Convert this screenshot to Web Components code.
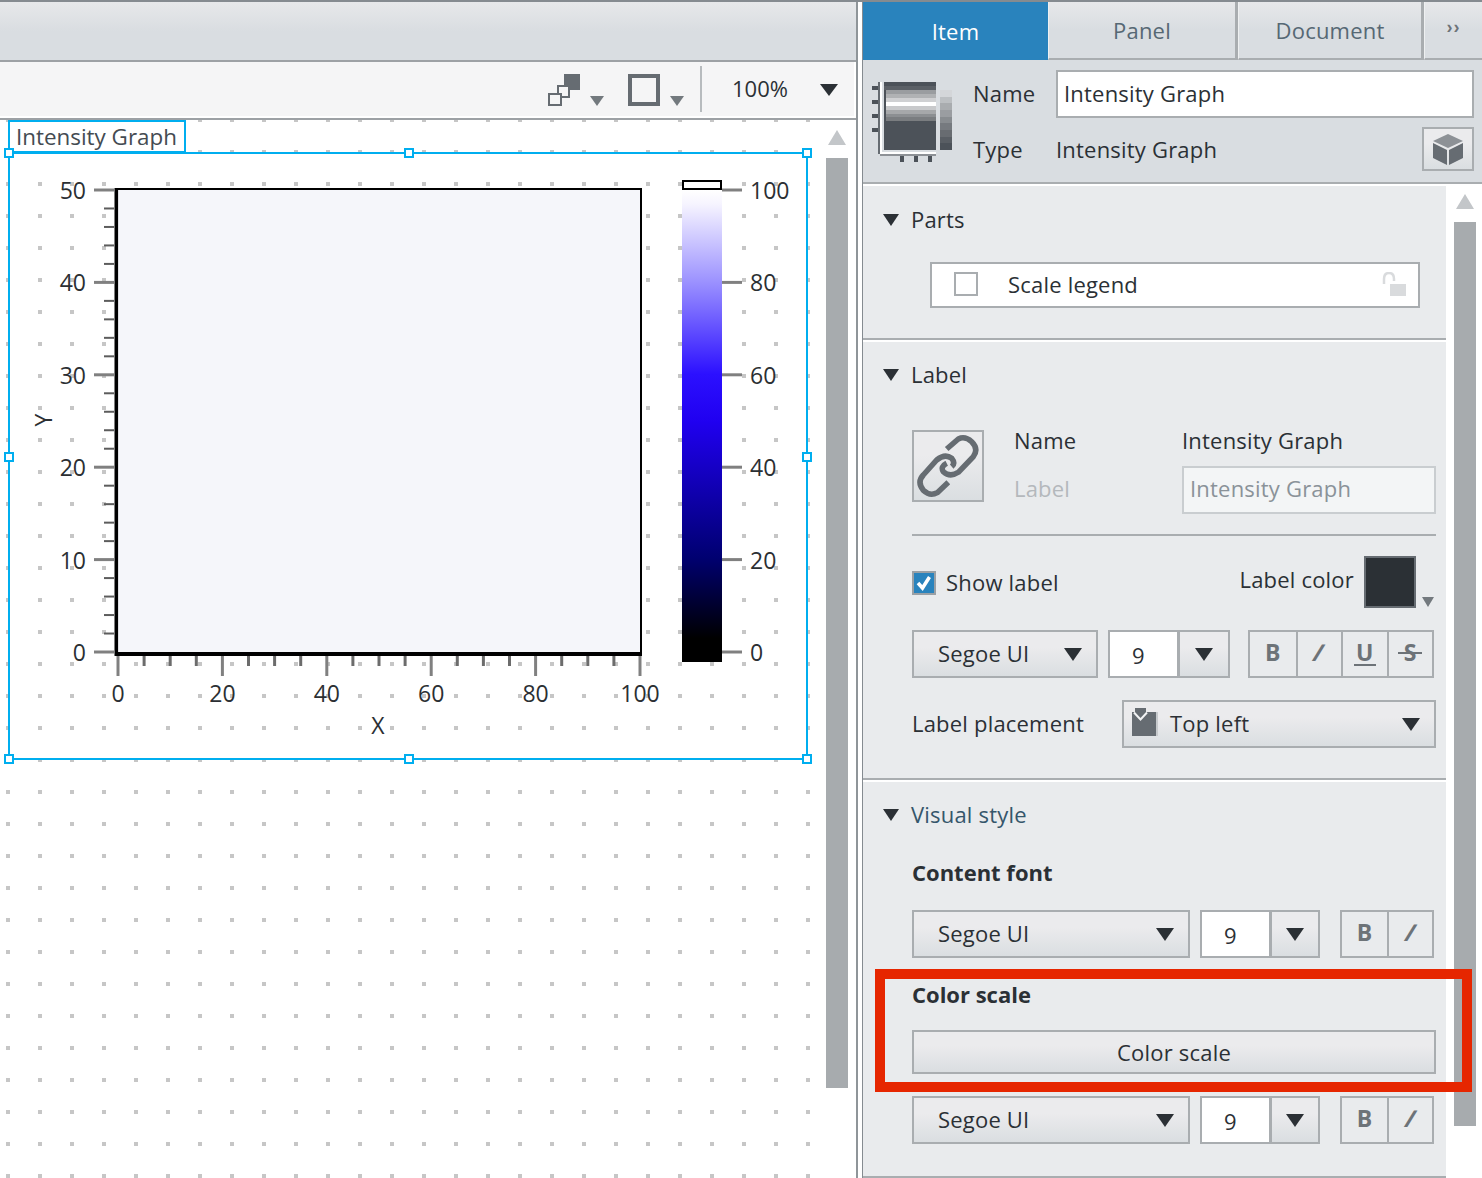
<!DOCTYPE html>
<html lang="en">

<head>
    <meta charset="UTF-8">
    <title>Intensity Graph</title>
    <style>
        html, body { margin: 0; height: 100%; }
        body {
            background: #fff;
            color: #2b3035;
            font: 22px/32px "Open Sans", "Noto Sans", sans-serif;
            letter-spacing: .2px;
            overflow: hidden;
        }
    </style>
    <script>
        const LINE = '#a9adb0';
        const GRAD = 'linear-gradient(#ebebed 35%, #dadee1)';

        class IdeWindow extends HTMLElement {
            constructor() {
                super();
                this.attachShadow({ mode: 'open' }).innerHTML = `
                <style>
                    :host { display: flex; height: 1178px; box-sizing: border-box; border-top: 2px solid #858b90; }
                    ::slotted(designer-pane) { width: 858px; flex: none; }
                    ::slotted(props-pane) { margin-left: 4px; flex: 1; min-width: 0; }
                </style>
                <slot></slot>`;
            }
        }
        customElements.define('ide-window', IdeWindow);

        class VScroll extends HTMLElement {
            constructor() {
                super();
                this.attachShadow({ mode: 'open' }).innerHTML = `
                <style>
                    :host { display: flex; flex-direction: column; align-items: center; box-sizing: border-box; width: 22px; }
                    .up { width: 0; border-left: 9px solid transparent; border-right: 9px solid transparent; border-bottom: 15px solid #c3c6c9; margin-bottom: 13px; }
                    .thumb { width: 100%; height: var(--thumb, 900px); background: #a7abae; }
                </style>
                <div class="up"></div>
                <div class="thumb"></div>`;
            }
        }
        customElements.define('v-scroll', VScroll);

        class DesignerPane extends HTMLElement {
            constructor() {
                super();
                this.attachShadow({ mode: 'open' }).innerHTML = `
                <style>
                    :host { display: flex; flex-direction: column; box-sizing: border-box; border-right: 2px solid #8f9599; }
                    .top { height: 58px; flex: none; border-bottom: 2px solid #9da1a5; background: linear-gradient(#e7e8ea, #d9dde1 50%); }
                    .wrap { flex: none; padding-bottom: 2px; border-bottom: 2px solid #9da1a5; }
                    .tools { height: 54px; margin-right: 2px; background: #f5f5f6; display: flex; align-items: center; justify-content: flex-end; }
                    .tools svg { display: block; flex: none; }
                    .small { width: 0; border-left: 7px solid transparent; border-right: 7px solid transparent; border-top: 10px solid #73797e; margin-top: 24px; }
                    .sep { width: 2px; height: 46px; background: #b7bbbe; margin-left: 16px; }
                    .zoom { margin-left: 30px; width: 60px; font-size: 22px; letter-spacing: 0; padding-bottom: 2px; }
                    .big { width: 0; border-left: 9px solid transparent; border-right: 9px solid transparent; border-top: 12px solid #2b3035; margin: 2px 16px 0 28px; }
                    .canvas { flex: 1; display: flex; min-height: 0; }
                    .stage { flex: 1; position: relative; overflow: hidden; }
                    v-scroll { --thumb: 930px; margin: 10px 8px 0 0; }
                </style>
                <div class="top"></div>
                <div class="wrap"><div class="tools">
                    <svg width="32" height="32" viewBox="0 0 32 32" style="margin-top:2px">
                        <rect x="16" y="0" width="16" height="16" fill="#666c72"/>
                        <rect x="10" y="12" width="11" height="11" fill="#f5f5f6" stroke="#666c72" stroke-width="2"/>
                        <rect x="1" y="20" width="12" height="11" fill="#f5f5f6" stroke="#666c72" stroke-width="2"/>
                    </svg>
                    <div class="small" style="margin-left:10px"></div>
                    <svg width="32" height="32" viewBox="0 0 32 32" style="margin:2px 0 0 24px">
                        <rect x="2" y="2" width="28" height="28" fill="none" stroke="#666c72" stroke-width="4"/>
                    </svg>
                    <div class="small" style="margin-left:10px"></div>
                    <div class="sep"></div>
                    <div class="zoom">100%</div>
                    <div class="big"></div>
                </div></div>
                <div class="canvas">
                    <div class="stage"><graph-view></graph-view></div>
                    <v-scroll></v-scroll>
                </div>`;
            }
        }
        customElements.define('designer-pane', DesignerPane);

        // everything in here uses page coordinates through the viewBox
        class GraphView extends HTMLElement {
            constructor() {
                super();
                const ys = [], xs = [];
                for (let i = 0; i <= 5; i++) { ys.push(190 + 92.4 * i); xs.push(118 + 104.4 * i); }
                let s = '';
                const line = (x1, y1, x2, y2, c, w) => `<line x1="${x1}" y1="${y1}" x2="${x2}" y2="${y2}" stroke="${c}" stroke-width="${w}"/>`;
                ys.forEach((y, i) => {
                    s += line(94, y, 114, y, '#808080', 3);
                    s += `<text x="86" y="${y + 9}" text-anchor="end">${50 - i * 10}</text>`;
                    s += line(722, y, 742, y, '#808080', 3);
                    s += `<text x="750" y="${y + 9}">${100 - i * 20}</text>`;
                    if (i < 5) for (let k = 1; k < 5; k++) s += line(104, y + k * 18.48, 114, y + k * 18.48, '#5c5c5c', 2);
                });
                xs.forEach((x, i) => {
                    s += line(x, 656, x, 676, '#808080', 3);
                    s += `<text x="${x}" y="702" text-anchor="middle">${i * 20}</text>`;
                    if (i < 5) for (let k = 1; k < 4; k++) s += line(x + k * 26.1, 656, x + k * 26.1, 666, '#6c6c6c', 3);
                });
                let handles = '';
                [[9, 153], [409, 153], [807, 153], [9, 457], [807, 457], [9, 759], [409, 759], [807, 759]].forEach(p => {
                    handles += `<rect x="${p[0] - 4}" y="${p[1] - 4}" width="8" height="8" fill="#fff" stroke="#00aeef" stroke-width="2"/>`;
                });
                this.attachShadow({ mode: 'open' }).innerHTML = `
                <style>
                    :host { position: absolute; left: 0; top: 0; width: 812px; height: 1058px; }
                    svg { display: block; }
                    text { font: 23px "Open Sans", sans-serif; letter-spacing: 0; fill: #2b2f33; }
                </style>
                <svg width="812" height="1058" viewBox="0 120 812 1058">
                    <defs>
                        <pattern id="dots" x="6" y="118" width="32" height="32" patternUnits="userSpaceOnUse">
                            <rect width="4" height="4" fill="#c6c6c6"/>
                        </pattern>
                        <linearGradient id="ramp" gradientUnits="userSpaceOnUse" x1="0" y1="190" x2="0" y2="662">
                            <stop offset="0" stop-color="#ffffff"/>
                            <stop offset="0.03" stop-color="#f6f4ff"/>
                            <stop offset="0.197" stop-color="#9a90ff"/>
                            <stop offset="0.39" stop-color="#2c10ff"/>
                            <stop offset="0.49" stop-color="#2000f0"/>
                            <stop offset="0.6" stop-color="#1400c0"/>
                            <stop offset="0.78" stop-color="#000070"/>
                            <stop offset="0.95" stop-color="#000000"/>
                            <stop offset="1" stop-color="#000000"/>
                        </linearGradient>
                    </defs>
                    <rect x="0" y="120" width="812" height="1058" fill="url(#dots)"/>
                    <rect x="116" y="189" width="525" height="465" fill="#f5f6fa"/>
                    ${line(116.3, 188, 116.3, 656, '#000', 3.6)}
                    ${line(116, 189, 642, 189, '#000', 2)}
                    ${line(641, 188, 641, 656, '#000', 2)}
                    ${line(116, 654, 642, 654, '#000', 4)}
                    <rect x="682" y="190" width="40" height="472" fill="url(#ramp)"/>
                    <rect x="683" y="181" width="38" height="8" fill="#fff" stroke="#000" stroke-width="2"/>
                    ${s}
                    <text x="378" y="734" text-anchor="middle">X</text>
                    <text transform="translate(52 420) rotate(-90)" text-anchor="middle">Y</text>
                    <rect x="9" y="153" width="798" height="606" fill="none" stroke="#00aeef" stroke-width="2"/>
                    <rect x="9" y="121" width="176" height="31" fill="#fff" stroke="#00aeef" stroke-width="2"/>
                    <text x="16" y="145" style="fill:#444b52;font-size:22.4px">Intensity Graph</text>
                    ${handles}
                </svg>`;
            }
        }
        customElements.define('graph-view', GraphView);

        class PropsPane extends HTMLElement {
            constructor() {
                super();
                const bands = [[0, '#4c5259'], [4, '#5b6066'], [8, '#9a9da0'], [12, '#b0b2b4'], [16, '#cfd0d2'], [20, '#ffffff'], [24, '#c8c9cb'], [28, '#a6a8aa'], [32, '#8c8f92'], [35, '#7a7d80']]
                    .map(b => `<rect x="${b[0] < 8 ? 12 : 14}" y="${b[0]}" width="${b[0] < 8 ? 52 : 50}" height="4" fill="${b[1]}"/>`).join('');
                const side = ['#d4d6d9', '#bcbfc2', '#a9acaf', '#9a9da1', '#888c90', '#767a7f', '#686c71', '#595e64', '#4c5259']
                    .map((c, i) => `<rect x="68" y="${8 + i * 6.67}" width="12" height="6.67" fill="${c}"/>`).join('');
                this.attachShadow({ mode: 'open' }).innerHTML = `
                <style>
                    :host { display: flex; flex-direction: column; box-sizing: border-box; border-left: 1px solid #858b90; min-width: 0; }
                    .tabs { display: grid; grid-template-columns: 185px 190px 186px 1fr; height: 58px; flex: none; }
                    .tab { display: flex; align-items: center; justify-content: center; box-sizing: border-box; height: 58px; color: #566874;
                           background: linear-gradient(#e7e8ea, #d9dde1 50%); border-bottom: 2px solid ${LINE}; border-right: 3px solid ${LINE}; border-left: 1px solid #eef0f1; }
                    .tab.on { background: #2983bd; color: #fff; border: 0; }
                    .tab.more { border-right: 0; font: bold 18px "Liberation Sans", sans-serif; color: #6d7378; padding-bottom: 6px; letter-spacing: 1px; }
                    .head { height: 124px; flex: none; box-sizing: border-box; padding: 10px 8px 0 0; background: #d9dde1; border-bottom: 2px solid ${LINE};
                            display: grid; grid-template-columns: 110px 83px 1fr; grid-template-rows: 48px 46px; row-gap: 8px; align-items: center; }
                    .icon { grid-row: 1 / 3; align-self: start; padding: 12px 0 0 9px; }
                    .icon svg { display: block; }
                    .nl { padding-bottom: 2px; }
                    .name { height: 48px; box-sizing: border-box; border: 2px solid ${LINE}; background: #fff; padding: 0 6px; line-height: 42px; }
                    .type { display: flex; align-items: center; justify-content: space-between; }
                    .cube { width: 52px; height: 44px; box-sizing: border-box; border: 2px solid ${LINE}; background: ${GRAD}; display: flex; align-items: center; justify-content: center; }
                    .body { flex: 1; display: flex; min-height: 0; margin-top: 2px; position: relative; }
                    .content { flex: 1; min-width: 0; }
                    v-scroll { --thumb: 904px; margin: 8px 6px 0 8px; }
                    .mark { position: absolute; left: 12px; top: 783px; width: 597px; height: 123px; box-sizing: border-box; border: 10px solid #e62600; pointer-events: none; }
                </style>
                <div class="tabs">
                    <div class="tab on">Item</div>
                    <div class="tab">Panel</div>
                    <div class="tab">Document</div>
                    <div class="tab more">››</div>
                </div>
                <div class="head">
                    <div class="icon">
                        <svg width="80" height="80" viewBox="0 0 80 80" shape-rendering="crispEdges">
                            <rect x="6" y="0" width="2" height="72" fill="#666c72"/>
                            <rect x="8" y="0" width="2" height="70" fill="#fff"/>
                            <rect x="8" y="70" width="56" height="2" fill="#fff"/>
                            <rect x="8" y="72" width="56" height="2" fill="#8d9196"/>
                            <rect x="12" y="0" width="52" height="68" fill="#4c5259"/>
                            ${bands}
                            ${side}
                            <path d="M0 6 H6 M0 20 H6 M0 34 H6 M0 48 H6" stroke="#4c5259" stroke-width="4"/>
                            <path d="M30 74 V80 M44 74 V80 M58 74 V80" stroke="#4c5259" stroke-width="4"/>
                        </svg>
                    </div>
                    <div class="nl">Name</div>
                    <div class="name">Intensity Graph</div>
                    <div>Type</div>
                    <div class="type">
                        <span>Intensity Graph</span>
                        <div class="cube">
                            <svg width="32" height="32" viewBox="0 0 32 32">
                                <polygon points="16,1 31,8 16,15 1,8" fill="#8d9196"/>
                                <polygon points="1,10 15,17 15,32 1,25" fill="#666c72"/>
                                <polygon points="31,10 17,17 17,32 31,25" fill="#666c72"/>
                            </svg>
                        </div>
                    </div>
                </div>
                <div class="body">
                    <div class="content"><slot></slot></div>
                    <v-scroll></v-scroll>
                    <div class="mark"></div>
                </div>`;
            }
        }
        customElements.define('props-pane', PropsPane);

        class PropSection extends HTMLElement {
            constructor() {
                super();
                this.attachShadow({ mode: 'open' }).innerHTML = `
                <style>
                    :host { display: block; box-sizing: border-box; background: #e9ebed; padding-top: var(--pad-top, 17px); height: var(--h); position: relative; }
                    :host([ruled]) { border-bottom: 2px solid ${LINE}; box-shadow: 0 2px 0 #fff; margin-bottom: 2px; }
                    .hd { display: flex; align-items: center; gap: 12px; height: 32px; box-sizing: border-box; padding: 0 0 2px 20px; }
                    .tri { width: 0; border-left: 8px solid transparent; border-right: 8px solid transparent; border-top: 12px solid #2b3035; margin-top: 2px; }
                    .body { padding: 0 10px 0 49px; }
                </style>
                <div class="hd"><div class="tri"></div><span id="t"></span></div>
                <div class="body"><slot></slot></div>`;
            }
            connectedCallback() {
                const t = this.shadowRoot.getElementById('t');
                t.textContent = this.getAttribute('heading');
                t.style.color = this.getAttribute('tone') || 'inherit';
            }
        }
        customElements.define('prop-section', PropSection);

        class PartRow extends HTMLElement {
            constructor() {
                super();
                this.attachShadow({ mode: 'open' }).innerHTML = `
                <style>
                    :host { display: flex; align-items: center; box-sizing: border-box; height: 46px; margin: 26px 16px 0 18px; padding: 0 12px 2px 22px; border: 2px solid ${LINE}; background: #fff; }
                    .box { width: 24px; height: 24px; box-sizing: border-box; border: 2px solid ${LINE}; margin-right: 30px; flex: none; }
                    .t { flex: 1; }
                    svg { display: block; }
                </style>
                <div class="box"></div>
                <div class="t"><slot></slot></div>
                <svg width="24" height="24" viewBox="0 0 24 24">
                    <rect x="8" y="12" width="16" height="12" fill="#d9dbdd"/>
                    <path d="M2 12 V7 Q2 1 7 1 Q12 1 12 7 V9" fill="none" stroke="#d9dbdd" stroke-width="2.5"/>
                </svg>`;
            }
        }
        customElements.define('part-row', PartRow);

        class PropSelect extends HTMLElement {
            constructor() {
                super();
                this.attachShadow({ mode: 'open' }).innerHTML = `
                <style>
                    :host { display: flex; align-items: center; box-sizing: border-box; height: 48px; width: var(--w, 186px); flex: none; border: 2px solid ${LINE};
                            background: ${GRAD}; padding: 0 14px 2px var(--pl, 24px); }
                    .t { flex: 1; white-space: nowrap; }
                    .a { width: 0; border-left: 9px solid transparent; border-right: 9px solid transparent; border-top: 13px solid #2b3035; flex: none; margin-top: 2px; }
                </style>
                <slot name="icon"></slot>
                <div class="t"><slot></slot></div>
                <div class="a"></div>`;
            }
        }
        customElements.define('prop-select', PropSelect);

        class SizeBox extends HTMLElement {
            constructor() {
                super();
                this.attachShadow({ mode: 'open' }).innerHTML = `
                <style>
                    :host { display: flex; box-sizing: border-box; height: 48px; width: var(--w, 122px); flex: none; border: 2px solid ${LINE}; background: ${GRAD}; }
                    .v { width: 70px; box-sizing: border-box; background: #fff; border-right: 3px solid ${LINE}; text-align: center; line-height: 46px; padding-right: 10px; }
                    .d { flex: 1; display: flex; align-items: center; justify-content: center; }
                    .a { width: 0; border-left: 9px solid transparent; border-right: 9px solid transparent; border-top: 13px solid #2b3035; }
                </style>
                <div class="v"><slot></slot></div>
                <div class="d"><div class="a"></div></div>`;
            }
        }
        customElements.define('size-box', SizeBox);

        class StyleBtns extends HTMLElement {
            connectedCallback() {
                if (this.shadowRoot) return;
                const cells = (this.getAttribute('keys') || 'BI').split('');
                this.attachShadow({ mode: 'open' }).innerHTML = `
                <style>
                    :host { display: grid; grid-auto-flow: column; grid-auto-columns: 1fr; box-sizing: border-box; height: 48px; flex: none; width: ${cells.length * 46 + 2}px; border: 2px solid ${LINE}; }
                    div { position: relative; display: flex; align-items: center; justify-content: center; border-left: 2px solid ${LINE}; color: #6d7378; font-weight: 700; font-size: 23px; padding-bottom: 4px; }
                    div:first-of-type { border-left: 0; }
                    .I span { display: block; font-style: italic; transform: skewX(-22deg); }
                    .U::after, .S::after { content: ""; position: absolute; left: 50%; height: 2px; background: #6d7378; }
                    .U::after { width: 22px; margin-left: -11px; top: 32px; }
                    .S::after { width: 24px; margin-left: -12px; top: 20px; }
                </style>
                ${cells.map(c => `<div class="${c}"><span>${c}</span></div>`).join('')}`;
            }
        }
        customElements.define('style-btns', StyleBtns);

        class FontRow extends HTMLElement {
            constructor() {
                super();
                this.attachShadow({ mode: 'open' }).innerHTML = `
                <style>
                    :host { display: flex; align-items: center; gap: 10px; }
                    style-btns { margin-left: auto; margin-right: 2px; }
                </style>
                <prop-select id="f">Segoe UI</prop-select>
                <size-box id="s">9</size-box>
                <style-btns id="b"></style-btns>`;
            }
            connectedCallback() {
                const wide = this.hasAttribute('wide');
                const r = this.shadowRoot;
                r.getElementById('f').style.setProperty('--w', wide ? '278px' : '186px');
                r.getElementById('s').style.setProperty('--w', wide ? '120px' : '122px');
                r.getElementById('b').setAttribute('keys', wide ? 'BI' : 'BIUS');
            }
        }
        customElements.define('font-row', FontRow);

        class LabelOptions extends HTMLElement {
            constructor() {
                super();
                this.attachShadow({ mode: 'open' }).innerHTML = `
                <style>
                    :host { display: block; }
                    .bind { display: grid; grid-template-columns: 72px 198px 254px; grid-template-rows: 36px 48px; row-gap: 7px; margin-top: 32px; align-items: center; }
                    .link { grid-row: 1 / 3; align-self: start; margin-top: 7px; width: 72px; height: 72px; box-sizing: border-box; border: 2px solid ${LINE}; background: ${GRAD}; }
                    .link svg { display: block; }
                    .lb { padding: 0 0 2px 30px; }
                    .off { color: #b4b8bc; padding-bottom: 4px; }
                    .top { padding-bottom: 2px; }
                    .ro { height: 48px; box-sizing: border-box; border: 2px solid #c9cdd0; background: #f3f5f6; color: #8a9299; padding-left: 6px; line-height: 40px; }
                    hr { border: 0; height: 2px; background: ${LINE}; margin: 20px 0; }
                    .show { display: flex; align-items: center; height: 52px; }
                    .chk { width: 24px; height: 24px; display: block; margin: 2px 10px 0 0; }
                    .sl { flex: 1; }
                    .lc { margin: -6px 10px 0 0; }
                    .sw { width: 52px; height: 52px; box-sizing: border-box; background: #2b3035; border: 2px solid #666c72; }
                    .sa { width: 0; border-left: 6px solid transparent; border-right: 6px solid transparent; border-top: 10px solid #73797e; margin: 40px 2px 0 6px; }
                    font-row { margin-top: 22px; }
                    .place { display: flex; align-items: center; justify-content: space-between; margin-top: 22px; }
                    .pl { padding-bottom: 2px; }
                    prop-select { --w: 314px; --pl: 8px; }
                    prop-select svg { display: block; margin: -2px 12px 0 0; }
                </style>
                <div class="bind">
                    <div class="link">
                        <svg width="68" height="68" viewBox="0 0 68 68" fill="none" stroke="#666c72" stroke-width="5.5">
                            <path d="M32.7 17 L44.3 7 Q51 3.7 57.7 9.7 Q65 17 59.3 24.7 L44.3 40.3 Q36 45.7 29.3 39.7 Q26 34.7 32.7 31.3"/>
                            <path d="M34.3 50.3 L23.3 60.7 Q16 64.7 9.3 58.3 Q2.7 50 9.3 43 L22.7 28 Q31 21.3 37.7 26.3 Q41.7 31.3 37.7 34.7"/>
                        </svg>
                    </div>
                    <div class="lb">Name</div><div class="top">Intensity Graph</div>
                    <div class="lb off">Label</div><div class="ro">Intensity Graph</div>
                </div>
                <hr>
                <div class="show">
                    <svg class="chk" viewBox="0 0 24 24">
                        <rect x="1" y="1" width="22" height="22" fill="#2983bd" stroke="#9aa0a5" stroke-width="2"/>
                        <path d="M6 12 L10.5 17 L17.5 6" fill="none" stroke="#fff" stroke-width="3.5"/>
                    </svg>
                    <div class="sl">Show label</div>
                    <div class="lc">Label color</div>
                    <div class="sw"></div>
                    <div class="sa"></div>
                </div>
                <font-row></font-row>
                <div class="place">
                    <div class="pl">Label placement</div>
                    <prop-select>
                        <svg slot="icon" width="26" height="28" viewBox="0 0 26 28">
                            <rect x="0" y="4" width="24" height="24" fill="#666c72"/>
                            <rect x="24" y="4" width="2" height="24" fill="#c6c9cc"/>
                            <path d="M3 0 H14 V5 L8.5 11 L3 5 Z" fill="#666c72"/>
                            <path d="M2 4.5 L8.5 11.5 L15 4.5" fill="none" stroke="#f2f3f4" stroke-width="2"/>
                        </svg>
                        Top left
                    </prop-select>
                </div>`;
            }
        }
        customElements.define('label-options', LabelOptions);

        class VisualOptions extends HTMLElement {
            constructor() {
                super();
                this.attachShadow({ mode: 'open' }).innerHTML = `
                <style>
                    :host { display: block; }
                    .b { font-weight: 700; height: 32px; line-height: 30px; letter-spacing: 0; }
                    .btn { height: 44px; box-sizing: border-box; border: 2px solid ${LINE}; background: ${GRAD}; text-align: center; line-height: 40px; margin-top: 19px; }
                </style>
                <div class="b" style="margin-top:26px">Content font</div>
                <font-row wide style="margin-top:21px"></font-row>
                <div class="b" style="margin-top:21px">Color scale</div>
                <div class="btn">Color scale</div>
                <font-row wide style="margin-top:22px"></font-row>`;
            }
        }
        customElements.define('visual-options', VisualOptions);
    </script>
</head>

<body>
    <ide-window>
        <designer-pane></designer-pane>
        <props-pane>
            <prop-section heading="Parts" ruled style="--pad-top:18px; --h:154px">
                <part-row>Scale legend</part-row>
            </prop-section>
            <prop-section heading="Label" ruled style="--h:438px">
                <label-options></label-options>
            </prop-section>
            <prop-section heading="Visual style" tone="#35566b" style="--h:396px; border-bottom:2px solid #a9adb0">
                <visual-options></visual-options>
            </prop-section>
        </props-pane>
    </ide-window>
</body>

</html>
